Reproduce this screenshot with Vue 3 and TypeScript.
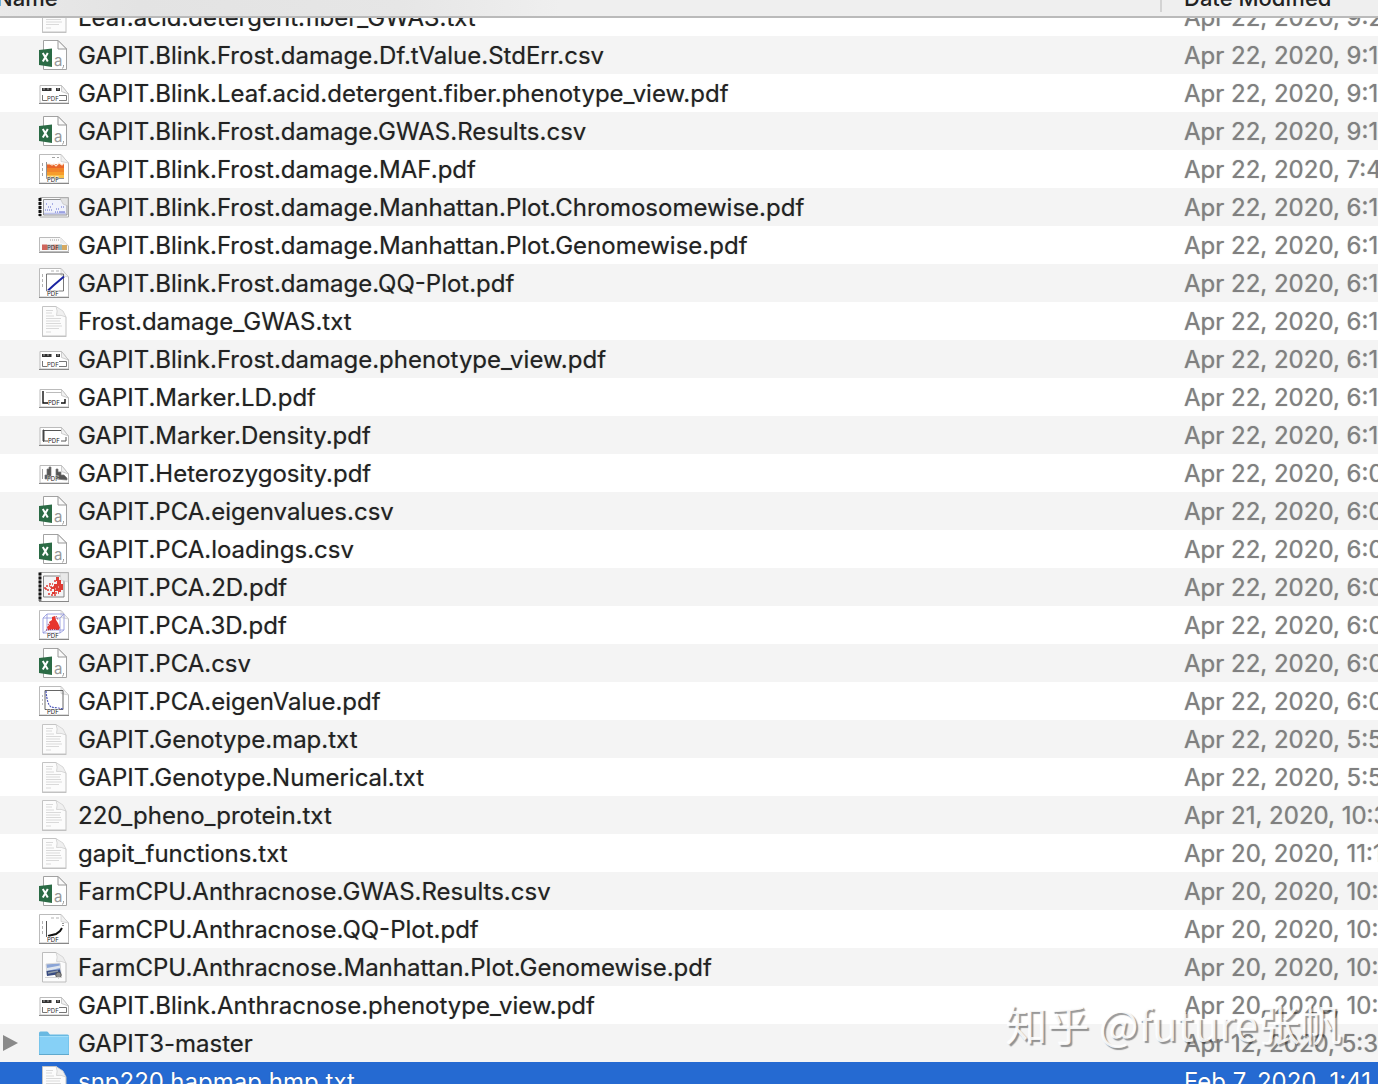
<script setup lang="ts">
type Kind =
  | 'txt' | 'csv' | 'view' | 'maf' | 'chrom' | 'genome' | 'qq' | 'ld' | 'density'
  | 'hetero' | 'pca2' | 'pca3' | 'eigen' | 'qqblack' | 'preview' | 'folder'

interface FileRow {
  name: string
  date: string
  kind: Kind
  selected?: boolean
}

const files: FileRow[] = [
  { name: 'Leaf.acid.detergent.fiber_GWAS.txt', date: 'Apr 22, 2020, 9:21 PM', kind: 'txt' },
  { name: 'GAPIT.Blink.Frost.damage.Df.tValue.StdErr.csv', date: 'Apr 22, 2020, 9:19 PM', kind: 'csv' },
  { name: 'GAPIT.Blink.Leaf.acid.detergent.fiber.phenotype_view.pdf', date: 'Apr 22, 2020, 9:19 PM', kind: 'view' },
  { name: 'GAPIT.Blink.Frost.damage.GWAS.Results.csv', date: 'Apr 22, 2020, 9:19 PM', kind: 'csv' },
  { name: 'GAPIT.Blink.Frost.damage.MAF.pdf', date: 'Apr 22, 2020, 7:44 PM', kind: 'maf' },
  { name: 'GAPIT.Blink.Frost.damage.Manhattan.Plot.Chromosomewise.pdf', date: 'Apr 22, 2020, 6:16 PM', kind: 'chrom' },
  { name: 'GAPIT.Blink.Frost.damage.Manhattan.Plot.Genomewise.pdf', date: 'Apr 22, 2020, 6:16 PM', kind: 'genome' },
  { name: 'GAPIT.Blink.Frost.damage.QQ-Plot.pdf', date: 'Apr 22, 2020, 6:16 PM', kind: 'qq' },
  { name: 'Frost.damage_GWAS.txt', date: 'Apr 22, 2020, 6:16 PM', kind: 'txt' },
  { name: 'GAPIT.Blink.Frost.damage.phenotype_view.pdf', date: 'Apr 22, 2020, 6:14 PM', kind: 'view' },
  { name: 'GAPIT.Marker.LD.pdf', date: 'Apr 22, 2020, 6:14 PM', kind: 'ld' },
  { name: 'GAPIT.Marker.Density.pdf', date: 'Apr 22, 2020, 6:14 PM', kind: 'density' },
  { name: 'GAPIT.Heterozygosity.pdf', date: 'Apr 22, 2020, 6:09 PM', kind: 'hetero' },
  { name: 'GAPIT.PCA.eigenvalues.csv', date: 'Apr 22, 2020, 6:09 PM', kind: 'csv' },
  { name: 'GAPIT.PCA.loadings.csv', date: 'Apr 22, 2020, 6:09 PM', kind: 'csv' },
  { name: 'GAPIT.PCA.2D.pdf', date: 'Apr 22, 2020, 6:09 PM', kind: 'pca2' },
  { name: 'GAPIT.PCA.3D.pdf', date: 'Apr 22, 2020, 6:09 PM', kind: 'pca3' },
  { name: 'GAPIT.PCA.csv', date: 'Apr 22, 2020, 6:09 PM', kind: 'csv' },
  { name: 'GAPIT.PCA.eigenValue.pdf', date: 'Apr 22, 2020, 6:09 PM', kind: 'eigen' },
  { name: 'GAPIT.Genotype.map.txt', date: 'Apr 22, 2020, 5:59 PM', kind: 'txt' },
  { name: 'GAPIT.Genotype.Numerical.txt', date: 'Apr 22, 2020, 5:59 PM', kind: 'txt' },
  { name: '220_pheno_protein.txt', date: 'Apr 21, 2020, 10:32 PM', kind: 'txt' },
  { name: 'gapit_functions.txt', date: 'Apr 20, 2020, 11:15 PM', kind: 'txt' },
  { name: 'FarmCPU.Anthracnose.GWAS.Results.csv', date: 'Apr 20, 2020, 10:42 PM', kind: 'csv' },
  { name: 'FarmCPU.Anthracnose.QQ-Plot.pdf', date: 'Apr 20, 2020, 10:42 PM', kind: 'qqblack' },
  { name: 'FarmCPU.Anthracnose.Manhattan.Plot.Genomewise.pdf', date: 'Apr 20, 2020, 10:42 PM', kind: 'preview' },
  { name: 'GAPIT.Blink.Anthracnose.phenotype_view.pdf', date: 'Apr 20, 2020, 10:40 PM', kind: 'view' },
  { name: 'GAPIT3-master', date: 'Apr 12, 2020, 5:38 PM', kind: 'folder' },
  { name: 'snp220.hapmap.hmp.txt', date: 'Feb 7, 2020, 1:41 PM', kind: 'txt', selected: true },
]

const squarePages: Kind[] = ['maf', 'qq', 'pca3', 'eigen', 'qqblack']
const widePages: Kind[] = ['view', 'ld', 'density', 'hetero']
</script>

<template>
  <main class="finder">
    <header class="head">
      <span class="head-name">Name</span>
      <span class="head-date">Date Modified</span>
    </header>
    <div class="viewport">
      <table class="files">
        <colgroup><col /><col class="col-date" /></colgroup>
        <tbody>
          <tr v-for="f in files" :key="f.name" :class="{ selected: f.selected }">
            <td>
              <div class="cell">
                <span class="gutter">
                  <button v-if="f.kind === 'folder'" class="disclosure" type="button" aria-label="Expand folder">
                    <svg width="16" height="18" viewBox="0 0 16 18"><path d="M0 1 15 9 0 17z" fill="#8a8a8a" /></svg>
                  </button>
                </span>
                <svg class="icon" viewBox="0 0 32 32" aria-hidden="true">
                  <!-- plain text page -->
                  <template v-if="f.kind === 'txt'">
                    <path d="M4.5 1.5H18L28 12V31H4.5z" fill="#fcfcfc" stroke="#c4c4c4" />
                    <path d="M18 1.5Q20 6 18.500 10.500Q23 9.500 28 12L25 6z" fill="#f0f0f0" stroke="#cfcfcf" stroke-width=".8" />
                    <path d="M8 5.500h7M8 8h6M8 11h8M8 13.500h15M8 16h14M8 18.500h15M8 21h16M8 23.500h13M8 27h5" stroke="#dadada" stroke-width="1" />
                    <path d="M4 31.500h24.500" stroke="#b4b4b4" stroke-width=".7" />
                  </template>

                  <!-- spreadsheet -->
                  <template v-else-if="f.kind === 'csv'">
                    <path d="M5.500 1.500H20L28.500 10V30.500H5.500z" fill="#fff" stroke="#a2a2a2" />
                    <path d="M20 1.500V10H28.500z" fill="#fafafa" stroke="#999" />
                    <path d="M1 11 14 9.500V28L1 26z" fill="#2b6b45" />
                    <path d="M4.800 14 9.800 22.500M9.800 14 4.800 22.500" stroke="#fff" stroke-width="2" />
                    <text x="16" y="27" font-size="15" fill="#999">a</text>
                    <path d="M25.500 26v1.500l-1 2" fill="none" stroke="#999" stroke-width="1" />
                  </template>

                  <!-- portrait document with a picture badge -->
                  <template v-else-if="f.kind === 'preview'">
                    <path d="M4.500 1.500H18L28 12V31H4.500z" fill="#fcfcfc" stroke="#bdbdbd" />
                    <path d="M18 1.500Q20 6 18.500 10.500Q23 9.500 28 12L25 6z" fill="#eee" stroke="#cfcfcf" stroke-width=".8" />
                    <path d="M8 13 22 12 23 22 9 24z" fill="#8aa4d6" stroke="#d9d9d9" />
                    <path d="M9 17 22 14.500V17L9 20z" fill="#dfe6ef" />
                    <path d="M8.500 20 22 18.500 23 23 9 25z" fill="#394c82" />
                    <path d="M10 22 20 20" stroke="#8e9aa7" stroke-width="1.500" />
                    <circle cx="20.500" cy="24" r="2.800" fill="#8c8c8c" stroke="#4e4e4e" stroke-width=".8" />
                    <path d="M7 26.500h17" stroke="#d4d4d4" />
                  </template>

                  <template v-else-if="f.kind === 'folder'">
                    <path d="M1 6Q1 4.500 2.500 4.500H9Q10 4.500 11 6.500L12 7.500H29.500Q31 7.500 31 9V28H1z" fill="#69b9e2" />
                    <path d="M1.500 9.500H30.500V27.500H1.500z" fill="#86d0f6" />
                    <path d="M1 27.500H31" stroke="#60a9cd" />
                    <path d="M1.500 9.500H30.500" stroke="#a2def9" />
                  </template>

                  <!-- filmstrip style plots -->
                  <template v-else-if="f.kind === 'chrom'">
                    <path d="M2 6.500H30.500V26H2z" fill="#fbfbfb" stroke="#aaa" />
                    <path d="M2 7V25" stroke="#111" stroke-width="3" stroke-dasharray="3 1" />
                    <path d="M5.500 8.500H29V24H5.500z" fill="#f0f2fb" stroke="#777" stroke-width=".8" />
                    <path d="M6.500 22.500h22M7 19h8M10 16h3M17 21h10M18 18h3M23 16h4M14 13h2M8 13h1M22 21h6" stroke="#8f96df" stroke-width="1.500" stroke-dasharray="1 1" />
                    <path d="M22 7H30V15L25 13z" fill="#e3e3e3" stroke="#bbb" stroke-width=".6" />
                  </template>
                  <template v-else-if="f.kind === 'pca2'">
                    <path d="M2 1.500H30.500V30.500H2z" fill="#fbfbfb" stroke="#aaa" />
                    <path d="M1 30.500H31" stroke="#888" />
                    <path d="M2 1.500V30" stroke="#111" stroke-width="3" stroke-dasharray="3 1" />
                    <path d="M5.500 5H26V26H5.500z" fill="#f4f4f6" stroke="#777" stroke-width=".9" />
                    <path d="M22 2H30V11L23 9z" fill="#e9e9e9" stroke="#ccc" stroke-width=".6" />
                    <path d="M18 6h3v3h2v4h2v6h-2v2h-3v-1h-3v3h-3v-2h2v-3h-3v-2h3v-3h3v-3h-1z" fill="#de3a33" />
                    <path d="M6 17h3M8 15h4M9 19h5M11 13h4M12 16h5M16 10h3M10 23h3M13 24h5M17 22h4M22 17h3M7 18h2" stroke="#de3a33" stroke-width="1.600" stroke-dasharray="2 1" />
                    <path d="M18 12h1M20 16h1M17 18h1" stroke="#fbe3e1" />
                  </template>
                  <template v-else-if="f.kind === 'genome'">
                    <path d="M1.500 8.500H22L30.500 17V22.500H1.500z" fill="#fafafa" stroke="#bbb" />
                    <path d="M1 23.500H31" stroke="#999" />
                    <path d="M12 11h10" stroke="#888" stroke-dasharray="1 1" stroke-width=".8" />
                    <path d="M4 15.500h5V21H4z" fill="#cf655c" /><path d="M9 15.500h6V21H9z" fill="#c9c4c8" />
                    <path d="M15 15.500h5V21h-5z" fill="#e59a87" /><path d="M20 15.500h4V21h-4z" fill="#94b6c0" /><path d="M24 16h5v5h-5z" fill="#d5a961" />
                    <path d="M22 8.500V14L30 16z" fill="#ececec" />
                    <text x="9" y="21" font-size="6" fill="#333">PDF</text>
                  </template>

                  <!-- landscape page thumbnails -->
                  <template v-else-if="widePages.includes(f.kind)">
                    <path d="M2 8.500H23.500L30.500 17V26H2z" fill="#fff" stroke="#bbb" />
                    <path d="M1 26.500H31" stroke="#888" />
                    <path d="M23.500 8.500V14.500L30.500 17z" fill="#f1f1f1" stroke="#bbb" stroke-width=".7" />
                    <template v-if="f.kind === 'view'">
                      <path d="M4 12.500H13.500M18 12.500h4" stroke="#333" stroke-width="3" />
                      <path d="M5 12h8M19 12h2" stroke="#aaa" stroke-width="1" stroke-dasharray="2 2" />
                      <path d="M4.500 18V23.500H9M21 18.500H28.500V23.500H21" fill="none" stroke="#666" stroke-width=".9" />
                      <text x="9" y="24" font-size="6" fill="#333">PDF</text>
                    </template>
                    <template v-else-if="f.kind === 'ld'">
                      <path d="M5 10V22H10M23 22H27V18" fill="none" stroke="#111" stroke-width="1.400" />
                      <path d="M8 11.500H23" stroke="#aaa" stroke-width=".8" />
                      <text x="10" y="24" font-size="6" fill="#222">PDF</text>
                    </template>
                    <template v-else-if="f.kind === 'density'">
                      <path d="M5.500 10.500V23M6 22H28V18M6 11.500H23" fill="none" stroke="#555" />
                      <path d="M5.500 11V22" stroke="#444" stroke-width="2" />
                      <path d="M10 18h13v6H10z" fill="#fff" />
                      <text x="10" y="24" font-size="6" fill="#222">PDF</text>
                    </template>
                    <template v-else>
                      <path d="M4.500 22V12M7 22v-4h2v-6h2v-2h2v12zM18 22V12h2v3h3v3h3l3 3v2z" fill="#555" stroke="#777" stroke-width=".7" />
                      <text x="9" y="24" font-size="6" fill="#222" stroke="#fff" stroke-width=".6" paint-order="stroke">PDF</text>
                    </template>
                  </template>

                  <!-- square page thumbnails -->
                  <template v-else-if="squarePages.includes(f.kind)">
                    <path d="M1.500 1.500H23L30.500 10V30H1.500z" fill="#fff" stroke="#bbb" />
                    <path d="M1 30.500H31" stroke="#888" />
                    <path d="M23 1.500V8.500L30.500 10z" fill="#f1f1f1" stroke="#ccc" stroke-width=".7" />
                    <template v-if="f.kind === 'maf'">
                      <path d="M9 11H26V18H9z" fill="#e8662a" /><path d="M9 15H26V20H9z" fill="#f1842a" /><path d="M9 19H26V23H9z" fill="#f69c2c" /><path d="M9 22H26V25H9z" fill="#f9c04a" />
                      <path d="M9 11h3l2 1 2-1 2 2 3-3 3 2 2-2" fill="none" stroke="#fbe3d0" stroke-width="1.200" />
                      <path d="M8.500 9V25.500H26" fill="none" stroke="#777" stroke-width=".8" />
                      <path d="M4.500 10V25M14 4.500h7" stroke="#999" stroke-width=".9" stroke-dasharray="3 2" />
                    </template>
                    <template v-else-if="f.kind === 'qq'">
                      <path d="M8.500 7H25.500V24H8.500z" fill="none" stroke="#555" stroke-width=".8" />
                      <path d="M10 23.500 16 18 26 9.500" fill="none" stroke="#1b25a2" stroke-width="2" />
                      <path d="M4.500 7V22M13 4h8" stroke="#aaa" stroke-width=".9" stroke-dasharray="3 2" />
                    </template>
                    <template v-else-if="f.kind === 'qqblack'">
                      <path d="M8.500 8V24" stroke="#444" stroke-width=".9" />
                      <path d="M10 23 18 21 22 18 24 15" fill="none" stroke="#111" stroke-width="2" />
                      <path d="M25 13V10" stroke="#333" stroke-dasharray="1 1" />
                      <path d="M4.500 8V22M13 5h8" stroke="#aaa" stroke-width=".9" stroke-dasharray="3 2" />
                    </template>
                    <template v-else-if="f.kind === 'pca3'">
                      <path d="M5 9H22V24H5zM9 5H26V21H9zM5 9 9 5M22 9l4-4M22 24l4-3M5 24l4-3" fill="none" stroke="#8d93dc" stroke-width=".8" />
                      <path d="m14 8 3-1 1 4 2 3 2 5-2 2-5-1-5 1-1-3 3-3-1-2 3-2z" fill="#e7352e" />
                      <path d="M8 21 22 20M18 7l2 4M10 16l2-3" stroke="#b1253c" stroke-width="1" stroke-dasharray="1 1" />
                    </template>
                    <template v-else>
                      <path d="M7 5.500H25V24.500H7z" fill="none" stroke="#555" stroke-width=".9" />
                      <path d="M8 6Q9 19 13 22L25 24" fill="none" stroke="#4a55b8" stroke-width="1.200" stroke-dasharray="2 1" />
                      <path d="M4.500 10V20" stroke="#aaa" stroke-width=".8" stroke-dasharray="2 2" />
                    </template>
                    <text x="9" y="29" font-size="6" fill="#222" stroke="#fff" stroke-width=".8" paint-order="stroke">PDF</text>
                  </template>
                </svg>
                <span class="name">{{ f.name }}</span>
              </div>
            </td>
            <td class="date">{{ f.date }}</td>
          </tr>
        </tbody>
      </table>
    </div>
    <div class="watermark">知乎 @future张帆</div>
  </main>
</template>

<style>
body {
  background: #fff;
  overflow: hidden;
}
</style>

<style scoped>
.finder {
  position: relative;
  display: flex;
  flex-direction: column;
  height: 100vh;
  overflow: hidden;
  font-family: Inter, "Liberation Sans", sans-serif;
  font-size: 24px;
  color: #222;
}
.head {
  display: flex;
  align-items: flex-end;
  height: 16px;
  flex: none;
  overflow: hidden;
  border-bottom: 2px solid #bababa;
  background: linear-gradient(90deg, #e9e9e9 0, #e3e3e3 140px, #e6e6e6 400px, #efefef 560px);
  font-size: 22px;
  font-weight: 500;
  line-height: 28px;
}
.head-name {
  flex: 1;
  margin-left: -4px;
  padding-bottom: 4px;
}
.head-date {
  box-sizing: border-box;
  width: 218px;
  margin-bottom: 4px;
  padding-left: 22px;
  border-left: 2px solid #d3d3d3;
  white-space: nowrap;
}
.viewport {
  flex: 1;
  min-height: 0;
  overflow: hidden;
}
.files {
  width: 100%;
  margin-top: -20px;
  table-layout: fixed;
  border-collapse: collapse;
}
.col-date {
  width: 218px;
}
.files td {
  padding: 0;
  white-space: nowrap;
  line-height: 36px;
}
.files tr:nth-child(even) {
  background: #f4f4f4;
}
.name,
.files .date {
  padding-top: 2px;
  text-shadow: 0 0 1px rgba(34, 34, 34, 0.4);
}
.files .date {
  padding-left: 24px;
  color: #808080;
}
.files .selected {
  background: #256ad2;
}
.selected td,
.files .selected .date {
  color: #fff;
}
.cell {
  display: flex;
  align-items: center;
  height: 38px;
}
.gutter {
  display: flex;
  width: 38px;
  padding-left: 3px;
  box-sizing: border-box;
}
.disclosure {
  display: flex;
  padding: 0;
  border: 0;
  background: none;
}
.icon {
  flex: none;
  width: 32px;
  height: 32px;
  margin-right: 8px;
}
.watermark {
  position: absolute;
  right: 36px;
  bottom: 31px;
  font-family: "Noto Sans CJK SC", sans-serif;
  font-size: 42px;
  font-weight: 400;
  line-height: 60px;
  color: rgba(255, 255, 255, 0.9);
  text-shadow: 2px 2px 1px rgba(0, 0, 0, 0.4);
  white-space: nowrap;
}
</style>
